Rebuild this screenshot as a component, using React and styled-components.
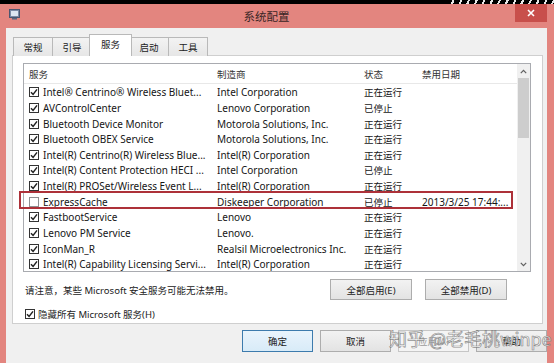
import React from 'react';
import styled, { createGlobalStyle, css } from 'styled-components';

const Global = createGlobalStyle`
  html, body { margin: 0; padding: 0; background: #000; }
  body { font-family: "Noto Sans", "Noto Sans CJK SC", sans-serif; }
  * { box-sizing: border-box; }
`;

const Screen = styled.div`
  position: relative;
  width: 554px;
  height: 363px;
  overflow: hidden;
  display: flex;
  flex-direction: column;
  background: #e3857f;
  font-size: 9.5px;
  color: #161616;
`;

const TopStrip = styled.div`
  flex: none;
  height: 4px;
  background:
    repeating-linear-gradient(115deg, #000 0 5px, #e8e8e8 5px 7px) right top / 107px 100% no-repeat,
    #000;
`;

const TitleBar = styled.div`
  flex: none;
  height: 24px;
  display: flex;
  align-items: flex-start;
  padding-left: 9px;
`;

const TitleIcon = styled.svg`
  flex: none;
  margin-top: 5px;
`;

const TitleText = styled.div`
  flex: 1;
  text-align: center;
  padding-top: 5px;
  padding-right: 2px;
  font-family: "Noto Sans CJK SC", sans-serif;
  font-size: 11.5px;
  line-height: 14px;
  color: #3a2626;
`;

const CloseBtn = styled.div`
  flex: none;
  width: 32px;
  height: 18px;
  margin-right: 7px;
  background: #c84f4b;
  color: #fff;
  display: flex;
  align-items: center;
  justify-content: center;
`;

const Frame = styled.div`
  flex: 1;
  display: flex;
  padding: 0 7px 0 6px;
`;

const Body = styled.div`
  flex: 1;
  background: #f0f0f0;
  display: flex;
  flex-direction: column;
  padding: 7px 4px 0 6px;
`;

const TabStrip = styled.div`
  display: flex;
  align-items: flex-end;
  height: 21px;
  padding-left: 2px;
  position: relative;
  z-index: 1;
  margin-bottom: -1px;
`;

const Tab = styled.div`
  height: 19px;
  padding: 0 9.5px;
  margin-left: -1px;
  display: flex;
  align-items: center;
  border: 1px solid #b9b9b9;
  border-bottom: none;
  background: linear-gradient(#f3f3f3, #e6e6e6);
  font-family: "Noto Sans CJK SC", sans-serif;
  font-size: 9.5px;
  color: #222;
  ${(p) =>
    p.$active &&
    css`
      height: 22px;
      padding: 0 11px 3px;
      margin: 0 -2px 0 -3px;
      background: #fff;
      position: relative;
      z-index: 2;
    `}
`;

const Panel = styled.div`
  height: 269px;
  border: 1px solid #cfcfcf;
  background: #fff;
  display: flex;
  flex-direction: column;
  padding: 7px 11px 0 10px;
`;

const ListBox = styled.div`
  position: relative;
  height: 209px;
  border: 1px solid #a9abb0;
  display: flex;
  background: #fff;
`;

const ListMain = styled.div`
  flex: 1;
  display: flex;
  flex-direction: column;
  overflow: hidden;
`;

const gridCols = css`
  display: grid;
  grid-template-columns: 188px 147px 58px 1fr;
  align-items: center;
  padding-left: 5px;
  white-space: nowrap;
`;

const HeaderRow = styled.div`
  ${gridCols};
  flex: none;
  height: 20px;
  border-bottom: 1px solid #e8e8e8;
  font-family: "Noto Sans CJK SC", sans-serif;
  color: #333;
  padding-top: 1px;
`;

const Row = styled.div`
  ${gridCols};
  flex: none;
  height: 15.64px;
  font-size: 10px;
  padding-top: 1px;
`;

const NameCell = styled.div`
  display: flex;
  align-items: center;
  gap: 4px;
  overflow: hidden;
`;

const Cell = styled.div`
  overflow: hidden;
`;

const StatusCell = styled.div`
  font-family: "Noto Sans CJK SC", sans-serif;
  font-size: 9.5px;
`;

const Box = styled.span`
  flex: none;
  width: 10px;
  height: 10px;
  border: 1px solid ${(p) => (p.$checked ? '#333' : '#8f9093')};
  background: #fff;
  display: inline-flex;
  align-items: center;
  justify-content: center;
`;

const Scrollbar = styled.div`
  flex: none;
  width: 13px;
  background: #f0f0f0;
  display: flex;
  flex-direction: column;
`;

const ArrowBtn = styled.div`
  height: 14px;
  display: flex;
  align-items: center;
  justify-content: center;
`;

const Thumb = styled.div`
  height: 60px;
  margin: 0 1px;
  background: #cdcdcd;
`;

const Track = styled.div`
  flex: 1;
`;

const Highlight = styled.div`
  position: absolute;
  left: -5px;
  top: 127px;
  width: 494px;
  height: 18px;
  border: 2px solid #ad3139;
  pointer-events: none;
`;

const NoticeRow = styled.div`
  display: flex;
  align-items: center;
  height: 21px;
  margin-top: 7px;
  padding: 0 24px 0 2px;
`;

const Notice = styled.div`
  flex: 1;
  color: #222;
`;

const BtnGroup = styled.div`
  display: flex;
  gap: ${(p) => p.$gap}px;
  margin-right: ${(p) => p.$mr || 0}px;
`;

const Btn = styled.div`
  width: ${(p) => p.$w}px;
  height: ${(p) => p.$h}px;
  border: 1px solid #adadad;
  background: linear-gradient(#f2f2f2, #e3e3e3);
  display: flex;
  align-items: center;
  justify-content: center;
  color: #1b1b1b;
  ${(p) =>
    p.$primary &&
    css`
      border-color: #3d7bad;
      background: linear-gradient(#e9f4fc, #d8ebf8);
    `}
  ${(p) =>
    p.$disabled &&
    css`
      border-color: #c6c6c6;
      background: #f4f4f4;
      color: #9d9d9d;
    `}
`;

const HideRow = styled.div`
  display: flex;
  align-items: center;
  gap: 3px;
  margin-top: 7px;
  padding-left: 2px;
  color: #222;
`;

const DialogButtons = styled.div`
  display: flex;
  justify-content: flex-end;
  margin-top: 6px;
`;

const Watermark = styled.div`
  position: absolute;
  left: 389px;
  top: 327px;
  font-family: "Noto Sans CJK SC", sans-serif;
  font-size: 18px;
  line-height: 22px;
  white-space: nowrap;
  color: rgba(255, 255, 255, 0.72);
  -webkit-text-stroke: 0.7px rgba(105, 105, 105, 0.75);
  pointer-events: none;
`;

const Check = () => (
  <svg width="8" height="8" viewBox="0 0 8 8">
    <path d="M1 4.2 L3.1 6.4 L7 1.4" fill="none" stroke="#222" strokeWidth="1.5" />
  </svg>
);

const CheckBox = ({ checked }) => <Box $checked={checked}>{checked && <Check />}</Box>;

const rows = [
  ['Intel® Centrino® Wireless Bluet...', 'Intel Corporation', '正在运行', '', true],
  ['AVControlCenter', 'Lenovo Corporation', '已停止', '', true],
  ['Bluetooth Device Monitor', 'Motorola Solutions, Inc.', '正在运行', '', true],
  ['Bluetooth OBEX Service', 'Motorola Solutions, Inc.', '正在运行', '', true],
  ['Intel(R) Centrino(R) Wireless Blue...', 'Intel(R) Corporation', '正在运行', '', true],
  ['Intel(R) Content Protection HECI ...', 'Intel Corporation', '已停止', '', true],
  ['Intel(R) PROSet/Wireless Event L...', 'Intel(R) Corporation', '正在运行', '', true],
  ['ExpressCache', 'Diskeeper Corporation', '已停止', '2013/3/25 17:44:...', false],
  ['FastbootService', 'Lenovo', '正在运行', '', true],
  ['Lenovo PM Service', 'Lenovo.', '正在运行', '', true],
  ['IconMan_R', 'Realsil Microelectronics Inc.', '正在运行', '', true],
  ['Intel(R) Capability Licensing Servi...', 'Intel(R) Corporation', '正在运行', '', true],
];

const tabs = ['常规', '引导', '服务', '启动', '工具'];

export default function App() {
  return (
    <>
      <Global />
      <Screen>
        <TopStrip />
        <TitleBar>
          <TitleIcon width="11" height="11" viewBox="0 0 11 11">
            <rect x="0.5" y="0.5" width="10" height="8" fill="#7d8aa6" stroke="#4b5670" />
            <rect x="2" y="2" width="7" height="5" fill="#dfe6f2" />
            <rect x="3" y="9" width="5" height="1.5" fill="#5a6580" />
          </TitleIcon>
          <TitleText>系统配置</TitleText>
          <CloseBtn>
            <svg width="8" height="8" viewBox="0 0 8 8">
              <path d="M1 1 L7 7 M7 1 L1 7" stroke="#fff" strokeWidth="1.6" />
            </svg>
          </CloseBtn>
        </TitleBar>
        <Frame>
          <Body>
            <TabStrip>
              {tabs.map((t) => (
                <Tab key={t} $active={t === '服务'}>
                  {t}
                </Tab>
              ))}
            </TabStrip>
            <Panel>
              <ListBox>
                <ListMain>
                  <HeaderRow>
                    <span>服务</span>
                    <span>制造商</span>
                    <span>状态</span>
                    <span>禁用日期</span>
                  </HeaderRow>
                  {rows.map(([name, mfr, status, date, checked]) => (
                    <Row key={name}>
                      <NameCell>
                        <CheckBox checked={checked} />
                        <span>{name}</span>
                      </NameCell>
                      <Cell>{mfr}</Cell>
                      <StatusCell>{status}</StatusCell>
                      <Cell>{date}</Cell>
                    </Row>
                  ))}
                </ListMain>
                <Scrollbar>
                  <ArrowBtn>
                    <svg width="7" height="5" viewBox="0 0 7 5">
                      <path d="M0.8 4.2 L3.5 1.3 L6.2 4.2" fill="none" stroke="#606060" strokeWidth="1.2" />
                    </svg>
                  </ArrowBtn>
                  <Thumb />
                  <Track />
                  <ArrowBtn>
                    <svg width="7" height="5" viewBox="0 0 7 5">
                      <path d="M0.8 0.8 L3.5 3.7 L6.2 0.8" fill="none" stroke="#606060" strokeWidth="1.2" />
                    </svg>
                  </ArrowBtn>
                </Scrollbar>
                <Highlight />
              </ListBox>
              <NoticeRow>
                <Notice>请注意，某些 Microsoft 安全服务可能无法禁用。</Notice>
                <BtnGroup $gap={13}>
                  <Btn $w={82} $h={21}>全部启用(E)</Btn>
                  <Btn $w={82} $h={21}>全部禁用(D)</Btn>
                </BtnGroup>
              </NoticeRow>
              <HideRow>
                <CheckBox checked />
                <span>隐藏所有 Microsoft 服务(H)</span>
              </HideRow>
            </Panel>
            <DialogButtons>
              <BtnGroup $gap={7} $mr={-4}>
                <Btn $w={71} $h={22} $primary>确定</Btn>
                <Btn $w={71} $h={22}>取消</Btn>
                <Btn $w={71} $h={22} $disabled>应用(A)</Btn>
                <Btn $w={71} $h={22}>帮助</Btn>
              </BtnGroup>
            </DialogButtons>
          </Body>
        </Frame>
        <Watermark>知乎 @老毛桃winpe</Watermark>
      </Screen>
    </>
  );
}
